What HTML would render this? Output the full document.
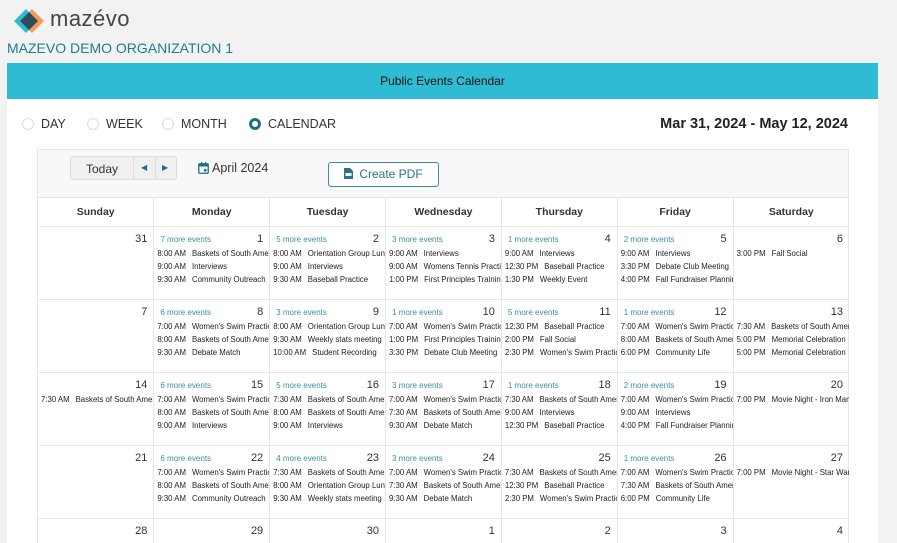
<!DOCTYPE html>
<html style="width:897px;height:543px;overflow:hidden"><head><meta charset="utf-8"><style>
*{box-sizing:border-box;margin:0;padding:0}
body{width:897px;height:543px;overflow:hidden;background:#f2f2f2;font-family:"Liberation Sans",sans-serif;color:#333;position:relative}
.logo{position:absolute;left:14px;top:9px}
.brand{position:absolute;left:50px;top:6px;font-size:22px;color:#444;letter-spacing:0.5px}
.org{position:absolute;left:7px;top:40px;font-size:14px;color:#1d7c93}
.card{position:absolute;left:7px;top:63px;width:871px;height:480px;background:#fff;overflow:hidden}
.banner{height:36px;background:#2dbcd4;text-align:center;line-height:36px;font-size:12px;color:#111}
.radios{position:absolute;left:15px;top:54px;font-size:12.5px;color:#333}
.r{position:absolute;top:0;white-space:nowrap}
.r i{display:inline-block;width:12px;height:12px;border:1px solid #ddd;border-radius:50%;vertical-align:-2px;margin-right:7px}
.r i.on{border:3px solid #1d6f86;background:#fff}
.range{position:absolute;right:30px;top:53px;font-size:14.5px;font-weight:bold;color:#222}
.cal{position:absolute;left:30px;top:86px;width:812px;border:1px solid #e6e6e6}
.tb{height:48px;background:#f8f8f8;position:relative;border-bottom:1px solid #e6e6e6}
.today{position:absolute;left:32px;top:6px;width:107px;height:24px;border:1px solid #ddd;border-radius:3px;background:#f0f0f0;font-size:12px}
.today span{position:absolute;top:5px}
.mon{position:absolute;left:160px;top:11px;font-size:12.5px}
.mon svg{vertical-align:-2px;margin-right:3px}
.pdf{position:absolute;left:290px;top:12px;width:111px;height:25px;border:1px solid #3a8a9c;border-radius:3px;background:#fff;color:#2a7488;font-size:12px;line-height:23px;text-align:center}
table{border-collapse:collapse;table-layout:fixed;width:811px}
th{height:28px;font-size:10.5px;font-weight:bold;color:#333;border-left:1px solid #e6e6e6;border-bottom:1px solid #e6e6e6}
td{height:73px;vertical-align:top;border-left:1px solid #e6e6e6;border-top:1px solid #e6e6e6;overflow:hidden;position:relative}
th:first-child,td:first-child{border-left:none}
.h{height:20px;position:relative;font-size:8px}
.h a{position:absolute;left:6px;top:8px;color:#3b8fa1;text-decoration:none}
.h b{position:absolute;right:6px;top:6px;font-size:11px;font-weight:normal;color:#333}
.e{font-size:7.8px;line-height:13px;white-space:nowrap;overflow:hidden;padding-left:3px;color:#222}
.e s{text-decoration:none;margin-right:6px}
</style></head><body>
<svg class="logo" width="30" height="24" viewBox="0 0 30 24"><path d="M12 0L24 12L12 24L0 12Z" fill="#2dbcd4"/><path d="M18 0L30 12L18 24L6 12Z" fill="#f49a5c"/><path d="M15 3L24 12L15 21L6 12Z" fill="#2f4c5c"/></svg>
<div class="brand">mazévo</div>
<div class="org">MAZEVO DEMO ORGANIZATION 1</div>
<div class="card">
<div class="banner">Public Events Calendar</div>
<div class="radios">
<span class="r" style="left:0"><i></i>DAY</span>
<span class="r" style="left:65px"><i></i>WEEK</span>
<span class="r" style="left:140px"><i></i>MONTH</span>
<span class="r" style="left:227px"><i class="on"></i>CALENDAR</span>
</div>
<div class="range">Mar 31, 2024 - May 12, 2024</div>
<div class="cal">
<div class="tb">
<div class="today"><span style="left:15px">Today</span><span style="left:62px;top:0;height:22px;width:1px;background:#ddd"></span><span style="left:70px;top:6px;font-size:8px;color:#1d6f86">◀</span><span style="left:84px;top:0;height:22px;width:1px;background:#ddd"></span><span style="left:91px;top:6px;font-size:8px;color:#1d6f86">▶</span></div>
<div class="mon"><svg width="11" height="12" viewBox="0 0 11 12"><rect x="0.75" y="1.75" width="9.5" height="9.5" rx="1" fill="none" stroke="#1d6f86" stroke-width="1.3"/><rect x="1" y="2" width="9" height="2.5" fill="#1d6f86"/><rect x="3" y="0" width="1.2" height="3" fill="#1d6f86"/><rect x="7" y="0" width="1.2" height="3" fill="#1d6f86"/><rect x="6" y="7" width="2.5" height="2.5" fill="#1d6f86"/></svg>April 2024</div>
<div class="pdf"><svg width="9" height="11" viewBox="0 0 9 11" style="vertical-align:-1px;margin-right:6px"><path d="M0 0H6L9 3V11H0Z" fill="#2a7488"/><rect x="1.5" y="5" width="6" height="3" fill="#fff"/></svg>Create PDF</div>
</div>
<table>
<tr><th>Sunday</th><th>Monday</th><th>Tuesday</th><th>Wednesday</th><th>Thursday</th><th>Friday</th><th>Saturday</th></tr>
<tr>
<td><div class="h"><b>31</b></div></td>
<td><div class="h"><a>7 more events</a><b>1</b></div><div class="e"><s>8:00 AM</s>Baskets of South America</div><div class="e"><s>9:00 AM</s>Interviews</div><div class="e"><s>9:30 AM</s>Community Outreach</div></td>
<td><div class="h"><a>5 more events</a><b>2</b></div><div class="e"><s>8:00 AM</s>Orientation Group Lunch</div><div class="e"><s>9:00 AM</s>Interviews</div><div class="e"><s>9:30 AM</s>Baseball Practice</div></td>
<td><div class="h"><a>3 more events</a><b>3</b></div><div class="e"><s>9:00 AM</s>Interviews</div><div class="e"><s>9:00 AM</s>Womens Tennis Practice</div><div class="e"><s>1:00 PM</s>First Principles Training</div></td>
<td><div class="h"><a>1 more events</a><b>4</b></div><div class="e"><s>9:00 AM</s>Interviews</div><div class="e"><s>12:30 PM</s>Baseball Practice</div><div class="e"><s>1:30 PM</s>Weekly Event</div></td>
<td><div class="h"><a>2 more events</a><b>5</b></div><div class="e"><s>9:00 AM</s>Interviews</div><div class="e"><s>3:30 PM</s>Debate Club Meeting</div><div class="e"><s>4:00 PM</s>Fall Fundraiser Planning</div></td>
<td><div class="h"><b>6</b></div><div class="e"><s>3:00 PM</s>Fall Social</div></td>
</tr>
<tr>
<td><div class="h"><b>7</b></div></td>
<td><div class="h"><a>6 more events</a><b>8</b></div><div class="e"><s>7:00 AM</s>Women's Swim Practice</div><div class="e"><s>8:00 AM</s>Baskets of South America</div><div class="e"><s>9:30 AM</s>Debate Match</div></td>
<td><div class="h"><a>3 more events</a><b>9</b></div><div class="e"><s>8:00 AM</s>Orientation Group Lunch</div><div class="e"><s>9:30 AM</s>Weekly stats meeting</div><div class="e"><s>10:00 AM</s>Student Recording</div></td>
<td><div class="h"><a>1 more events</a><b>10</b></div><div class="e"><s>7:00 AM</s>Women's Swim Practice</div><div class="e"><s>1:00 PM</s>First Principles Training</div><div class="e"><s>3:30 PM</s>Debate Club Meeting</div></td>
<td><div class="h"><a>5 more events</a><b>11</b></div><div class="e"><s>12:30 PM</s>Baseball Practice</div><div class="e"><s>2:00 PM</s>Fall Social</div><div class="e"><s>2:30 PM</s>Women's Swim Practice</div></td>
<td><div class="h"><a>1 more events</a><b>12</b></div><div class="e"><s>7:00 AM</s>Women's Swim Practice</div><div class="e"><s>8:00 AM</s>Baskets of South America</div><div class="e"><s>6:00 PM</s>Community Life</div></td>
<td><div class="h"><b>13</b></div><div class="e"><s>7:30 AM</s>Baskets of South America</div><div class="e"><s>5:00 PM</s>Memorial Celebration</div><div class="e"><s>5:00 PM</s>Memorial Celebration</div></td>
</tr>
<tr>
<td><div class="h"><b>14</b></div><div class="e"><s>7:30 AM</s>Baskets of South America</div></td>
<td><div class="h"><a>6 more events</a><b>15</b></div><div class="e"><s>7:00 AM</s>Women's Swim Practice</div><div class="e"><s>8:00 AM</s>Baskets of South America</div><div class="e"><s>9:00 AM</s>Interviews</div></td>
<td><div class="h"><a>5 more events</a><b>16</b></div><div class="e"><s>7:30 AM</s>Baskets of South America</div><div class="e"><s>8:00 AM</s>Baskets of South America</div><div class="e"><s>9:00 AM</s>Interviews</div></td>
<td><div class="h"><a>3 more events</a><b>17</b></div><div class="e"><s>7:00 AM</s>Women's Swim Practice</div><div class="e"><s>7:30 AM</s>Baskets of South America</div><div class="e"><s>9:30 AM</s>Debate Match</div></td>
<td><div class="h"><a>1 more events</a><b>18</b></div><div class="e"><s>7:30 AM</s>Baskets of South America</div><div class="e"><s>9:00 AM</s>Interviews</div><div class="e"><s>12:30 PM</s>Baseball Practice</div></td>
<td><div class="h"><a>2 more events</a><b>19</b></div><div class="e"><s>7:00 AM</s>Women's Swim Practice</div><div class="e"><s>9:00 AM</s>Interviews</div><div class="e"><s>4:00 PM</s>Fall Fundraiser Planning</div></td>
<td><div class="h"><b>20</b></div><div class="e"><s>7:00 PM</s>Movie Night - Iron Man</div></td>
</tr>
<tr>
<td><div class="h"><b>21</b></div></td>
<td><div class="h"><a>6 more events</a><b>22</b></div><div class="e"><s>7:00 AM</s>Women's Swim Practice</div><div class="e"><s>8:00 AM</s>Baskets of South America</div><div class="e"><s>9:30 AM</s>Community Outreach</div></td>
<td><div class="h"><a>4 more events</a><b>23</b></div><div class="e"><s>7:30 AM</s>Baskets of South America</div><div class="e"><s>8:00 AM</s>Orientation Group Lunch</div><div class="e"><s>9:30 AM</s>Weekly stats meeting</div></td>
<td><div class="h"><a>3 more events</a><b>24</b></div><div class="e"><s>7:00 AM</s>Women's Swim Practice</div><div class="e"><s>7:30 AM</s>Baskets of South America</div><div class="e"><s>9:30 AM</s>Debate Match</div></td>
<td><div class="h"><b>25</b></div><div class="e"><s>7:30 AM</s>Baskets of South America</div><div class="e"><s>12:30 PM</s>Baseball Practice</div><div class="e"><s>2:30 PM</s>Women's Swim Practice</div></td>
<td><div class="h"><a>1 more events</a><b>26</b></div><div class="e"><s>7:00 AM</s>Women's Swim Practice</div><div class="e"><s>7:30 AM</s>Baskets of South America</div><div class="e"><s>6:00 PM</s>Community Life</div></td>
<td><div class="h"><b>27</b></div><div class="e"><s>7:00 PM</s>Movie Night - Star Wars</div></td>
</tr>
<tr>
<td><div class="h"><b>28</b></div></td>
<td><div class="h"><b>29</b></div></td>
<td><div class="h"><b>30</b></div></td>
<td><div class="h"><b>1</b></div></td>
<td><div class="h"><b>2</b></div></td>
<td><div class="h"><b>3</b></div></td>
<td><div class="h"><b>4</b></div></td>
</tr>
</table>
</div>
</div>
</body></html>
